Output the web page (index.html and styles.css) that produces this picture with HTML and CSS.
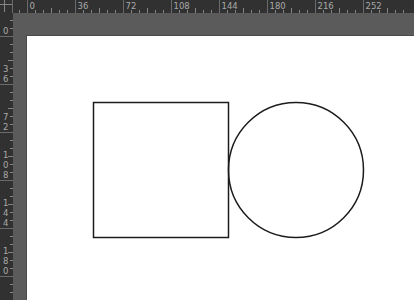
FILE: index.html
```html
<!DOCTYPE html>
<html>
<head>
<meta charset="utf-8">
<link rel="stylesheet" href="styles.css">
</head>
<body>
<div class="app">
  <div class="top-row">
    <div class="corner">
      <svg width="13" height="13" viewBox="0 0 13 13">
        <line x1="0" y1="4.5" x2="12" y2="4.5" class="tick"/>
        <line x1="4.5" y1="0" x2="4.5" y2="12" class="tick"/>
        <line x1="12.5" y1="0" x2="12.5" y2="13" class="major"/>
      </svg>
    </div>
    <div class="hruler">
      <svg id="hr" width="401" height="13"></svg>
    </div>
  </div>
  <div class="main-row">
    <div class="vruler">
      <svg id="vr" width="13" height="287"></svg>
    </div>
    <div class="workspace">
      <div class="canvas">
        <svg class="art" width="387" height="264" viewBox="0 0 387 264">
          <rect x="66.5" y="66.5" width="135" height="135" class="shape"/>
          <circle cx="269" cy="134" r="67.5" class="shape"/>
        </svg>
      </div>
    </div>
  </div>
</div>
<script src="script.js"></script>
</body>
</html>
```
FILE: styles.css
```css
html, body {
  margin: 0;
  padding: 0;
  width: 414px;
  height: 300px;
  overflow: hidden;
  background: #5b5b5b;
  font-family: "DejaVu Sans", "Liberation Sans", sans-serif;
}
.app {
  display: flex;
  flex-direction: column;
  width: 414px;
  height: 300px;
}
.top-row {
  display: flex;
  height: 13px;
  flex: none;
  background: #313131;
}
.corner {
  width: 13px;
  height: 13px;
  flex: none;
}
.corner svg, .hruler svg, .vruler svg {
  display: block;
}
.hruler {
  flex: 1;
  overflow: hidden;
}
.main-row {
  display: flex;
  flex: 1;
  min-height: 0;
}
.vruler {
  width: 13px;
  flex: none;
  background: #313131;
  overflow: hidden;
}
.workspace {
  flex: 1;
  display: flex;
  padding: 23px 0 0 14px;
  background: #5b5b5b;
  min-width: 0;
}
.canvas {
  flex: 1;
  background: #ffffff;
  box-shadow: -1px -1px 0 #4a4a4a;
  overflow: hidden;
}
.art {
  display: block;
}
.shape {
  fill: none;
  stroke: #1c1c1c;
  stroke-width: 1.5;
}
.tick {
  stroke: #858585;
  stroke-width: 1;
}
.major {
  stroke: #6a6a6a;
  stroke-width: 1;
}
.rlabel {
  fill: #a9a9a9;
  font-family: "DejaVu Sans", "Liberation Sans", sans-serif;
  font-size: 8.5px;
}
```
FILE: script.js
```js
(function () {
  var NS = "http://www.w3.org/2000/svg";
  function el(parent, name, attrs, text) {
    var e = document.createElementNS(NS, name);
    for (var k in attrs) e.setAttribute(k, attrs[k]);
    if (text !== undefined) e.textContent = text;
    parent.appendChild(e);
    return e;
  }
  // horizontal ruler: page x = 13 + svg x; zero at page 27 -> svg 14
  var hr = document.getElementById("hr");
  var z = 14;
  for (var x = z - 8; x < 401; x += 8) {
    var step = Math.round((x - z) / 8);
    var m = ((step % 6) + 6) % 6;
    if (m === 0) {
      if (x + 20 > 401) continue;
      el(hr, "line", { x1: x + 0.5, y1: 0, x2: x + 0.5, y2: 13, "class": "major" });
      el(hr, "text", { x: x + 2.5, y: 9, "class": "rlabel" }, String(step / 6 * 36));
    } else if (m === 3) {
      el(hr, "line", { x1: x + 0.5, y1: 8, x2: x + 0.5, y2: 13, "class": "tick" });
    } else {
      el(hr, "line", { x1: x + 0.5, y1: 10, x2: x + 0.5, y2: 13, "class": "tick" });
    }
  }
  // vertical ruler: page y = 13 + svg y; zero at page 36 -> svg 23
  var vr = document.getElementById("vr");
  var zy = 23;
  for (var y = zy - 16; y < 287; y += 8) {
    var s = Math.round((y - zy) / 8);
    var mm = ((s % 6) + 6) % 6;
    if (mm === 0) {
      el(vr, "line", { x1: 0, y1: y + 0.5, x2: 13, y2: y + 0.5, "class": "major" });
      var label = String(s / 6 * 36);
      for (var i = 0; i < label.length; i++) {
        var by = y - 2 - (label.length - 1 - i) * 10;
        el(vr, "text", { x: 3, y: by, "class": "rlabel" }, label[i]);
      }
    } else if (mm === 3) {
      el(vr, "line", { x1: 8, y1: y + 0.5, x2: 13, y2: y + 0.5, "class": "tick" });
    } else {
      el(vr, "line", { x1: 10, y1: y + 0.5, x2: 13, y2: y + 0.5, "class": "tick" });
    }
  }
})();
```
